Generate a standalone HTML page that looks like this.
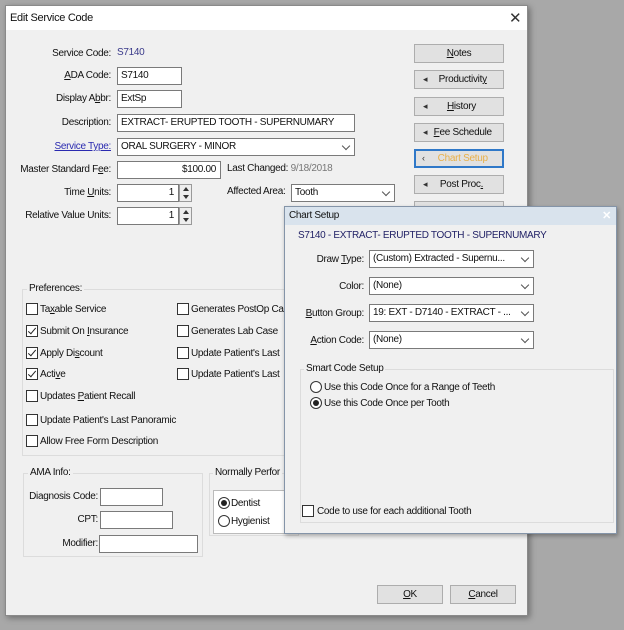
<!DOCTYPE html>
<html><head><style>
*{box-sizing:border-box;margin:0;padding:0}
body{width:624px;height:630px;background:#a8a8a8;font-family:"Liberation Sans",sans-serif;font-size:10px;letter-spacing:-0.3px;color:#111;position:relative;overflow:hidden}
.a{position:absolute;white-space:nowrap}
.win{position:absolute;left:5px;top:5px;width:523px;height:611px;background:#f0f0f0;border:1px solid #8a8a8a;box-shadow:2px 2px 6px rgba(0,0,0,.35)}
.tb{position:absolute;left:0;top:0;right:0;height:24px;background:#fff}
.in{position:absolute;background:#fff;border:1px solid #7a7a7a;height:18px;line-height:16px;padding-left:3px;overflow:hidden;white-space:nowrap}
.r{text-align:right;padding-right:4px}
.lb{position:absolute;text-align:right;line-height:14px;white-space:nowrap}
.btn{position:absolute;background:#e1e1e1;border:1px solid #adadad;height:19px;line-height:17px;text-align:center;white-space:nowrap}
.arr{position:absolute;left:8px;top:0;font-size:9px;color:#333}
.chev{position:absolute;right:5px;top:2px;width:6px;height:6px;border-right:1px solid #555;border-bottom:1px solid #555;transform:rotate(45deg)}
.cb{position:absolute;width:12px;height:12px;border:1px solid #333;background:#fff}
.cb.on::after{content:"";position:absolute;left:3px;top:0px;width:3px;height:7px;border-right:1px solid #222;border-bottom:1px solid #222;transform:rotate(40deg)}
.rd{position:absolute;width:12px;height:12px;border:1px solid #333;border-radius:50%;background:#fff}
.rd.on::after{content:"";position:absolute;left:2px;top:2px;width:6px;height:6px;border-radius:50%;background:#222}
.grp{position:absolute;border:1px solid #dcdcdc}
.gl{position:absolute;background:#f0f0f0;padding:0 2px;line-height:13px;white-space:nowrap}
.spin{position:absolute;width:13px;height:18px;border:1px solid #9a9a9a;background:#eee}
.spin::before{content:"";position:absolute;left:3px;top:2px;border:3px solid transparent;border-bottom:4px solid #333;border-top:0}
.spin::after{content:"";position:absolute;left:3px;bottom:2px;border:3px solid transparent;border-top:4px solid #333;border-bottom:0}
u{text-decoration:underline}
</style></head><body>
<div class="win">
<div class="tb"><span class="a" style="left:4px;top:6px;font-size:11px">Edit Service Code</span><span class="a" style="left:503px;top:3px;font-size:15px;font-weight:100;color:#333">✕</span></div>
</div>
<div class="lb" style="left:0;width:111px;top:47px">Service Code:</div>
<span class="a" style="left:117px;top:47px;color:#3a3a8a">S7140</span>
<div class="lb" style="left:0;width:111px;top:69px"><u>A</u>DA Code:</div>
<div class="in" style="left:117px;top:67px;width:65px">S7140</div>
<div class="lb" style="left:0;width:111px;top:92px">Display A<u>b</u>br:</div>
<div class="in" style="left:117px;top:90px;width:65px">ExtSp</div>
<div class="lb" style="left:0;width:111px;top:116px">Description:</div>
<div class="in" style="left:117px;top:114px;width:238px">EXTRACT- ERUPTED TOOTH - SUPERNUMARY</div>
<div class="lb" style="left:0;width:111px;top:140px;color:#2a2ab0"><u>Service Type:</u></div>
<div class="in" style="left:117px;top:138px;width:238px">ORAL SURGERY - MINOR<span class="chev" style="top:4px"></span></div>
<div class="lb" style="left:0;width:111px;top:163px">Master Standard F<u>e</u>e:</div>
<div class="in r" style="left:117px;top:161px;width:104px">$100.00</div>
<span class="a" style="left:227px;top:163px">Last Changed: <span style="color:#777">9/18/2018</span></span>
<div class="lb" style="left:0;width:111px;top:186px">Time <u>U</u>nits:</div>
<div class="in r" style="left:117px;top:184px;width:62px">1</div><div class="spin" style="left:179px;top:184px"></div>
<span class="a" style="left:227px;top:186px">Affected Area:</span>
<div class="in" style="left:291px;top:184px;width:104px">Tooth<span class="chev" style="top:4px"></span></div>
<div class="lb" style="left:0;width:111px;top:209px">Relative Value Units:</div>
<div class="in r" style="left:117px;top:207px;width:62px">1</div><div class="spin" style="left:179px;top:207px"></div>
<div class="btn" style="left:414px;top:44px;width:90px"><u>N</u>otes</div>
<div class="btn" style="left:414px;top:70px;width:90px"><span class="arr">◂</span>&nbsp;&nbsp;&nbsp;Productivit<u>y</u></div>
<div class="btn" style="left:414px;top:97px;width:90px"><span class="arr">◂</span>&nbsp;&nbsp;<u>H</u>istory</div>
<div class="btn" style="left:414px;top:123px;width:90px"><span class="arr">◂</span>&nbsp;&nbsp;&nbsp;<u>F</u>ee Schedule</div>
<div class="btn" style="left:414px;top:149px;width:90px;border:2px solid #2f78c8;color:#e8b04a;line-height:15px"><span class="arr" style="color:#333;left:6px">‹</span>&nbsp;&nbsp;&nbsp;Chart Setup</div>
<div class="btn" style="left:414px;top:175px;width:90px"><span class="arr">◂</span>&nbsp;&nbsp;Post Proc<u>.</u></div>
<div class="btn" style="left:414px;top:201px;width:90px"></div>
<div class="grp" style="left:22px;top:289px;width:280px;height:167px"></div>
<span class="gl" style="left:27px;top:282px">Preferences:</span>
<div class="cb" style="left:26px;top:303px"></div><span class="a" style="left:40px;top:304px">Ta<u>x</u>able Service</span>
<div class="cb on" style="left:26px;top:325px"></div><span class="a" style="left:40px;top:326px">Submit On <u>I</u>nsurance</span>
<div class="cb on" style="left:26px;top:347px"></div><span class="a" style="left:40px;top:348px">Apply Di<u>s</u>count</span>
<div class="cb on" style="left:26px;top:368px"></div><span class="a" style="left:40px;top:369px">Acti<u>v</u>e</span>
<div class="cb" style="left:26px;top:390px"></div><span class="a" style="left:40px;top:391px">Updates <u>P</u>atient Recall</span>
<div class="cb" style="left:26px;top:414px"></div><span class="a" style="left:40px;top:415px">Update Patient's Last Panoramic</span>
<div class="cb" style="left:26px;top:435px"></div><span class="a" style="left:40px;top:436px">Allow Free Form Description</span>
<div class="cb" style="left:177px;top:303px"></div><span class="a" style="left:191px;top:304px">Generates PostOp Ca</span>
<div class="cb" style="left:177px;top:325px"></div><span class="a" style="left:191px;top:326px">Generates Lab Case</span>
<div class="cb" style="left:177px;top:347px"></div><span class="a" style="left:191px;top:348px">Update Patient's Last</span>
<div class="cb" style="left:177px;top:368px"></div><span class="a" style="left:191px;top:369px">Update Patient's Last</span>
<div class="grp" style="left:23px;top:473px;width:180px;height:84px"></div>
<span class="gl" style="left:28px;top:466px">AMA Info:</span>
<div class="lb" style="left:0;width:98px;top:490px">Diagnosis Code:</div><div class="in" style="left:100px;top:488px;width:63px"></div>
<div class="lb" style="left:0;width:98px;top:513px">CPT:</div><div class="in" style="left:100px;top:511px;width:73px"></div>
<div class="lb" style="left:0;width:98px;top:537px">Modifier:</div><div class="in" style="left:99px;top:535px;width:99px"></div>
<div class="grp" style="left:209px;top:473px;width:90px;height:63px"></div>
<span class="gl" style="left:213px;top:466px">Normally Perfor</span>
<div style="position:absolute;left:213px;top:490px;width:80px;height:44px;background:#fff;border:1px solid #bbb"></div>
<div class="rd on" style="left:218px;top:497px"></div><span class="a" style="left:231px;top:498px">Dentist</span>
<div class="rd" style="left:218px;top:515px"></div><span class="a" style="left:231px;top:516px">Hygienist</span>
<div class="btn" style="left:377px;top:585px;width:66px;height:19px"><u>O</u>K</div>
<div class="btn" style="left:450px;top:585px;width:66px;height:19px"><u>C</u>ancel</div>
<div style="position:absolute;left:284px;top:206px;width:333px;height:328px;background:#f0f0f0;border:1px solid #8494a8;box-shadow:1px 2px 4px rgba(0,0,0,.3)">
<div style="position:absolute;left:0;top:0;right:0;height:18px;background:#d9e3ed"><span class="a" style="left:4px;top:3px">Chart Setup</span><span class="a" style="right:5px;top:2px;color:#fff;font-weight:bold;font-size:11px">✕</span></div>
</div>
<span class="a" style="left:298px;top:230px;color:#222266">S7140 - EXTRACT- ERUPTED TOOTH - SUPERNUMARY</span>
<div class="lb" style="left:290px;width:74px;top:253px">Draw <u>T</u>ype:</div>
<div class="in" style="left:369px;top:250px;width:165px">(Custom) Extracted - Supernu...<span class="chev" style="top:4px"></span></div>
<div class="lb" style="left:290px;width:74px;top:280px">Color:</div>
<div class="in" style="left:369px;top:277px;width:165px">(None)<span class="chev" style="top:4px"></span></div>
<div class="lb" style="left:290px;width:74px;top:307px"><u>B</u>utton Group:</div>
<div class="in" style="left:369px;top:304px;width:165px">19: EXT - D7140 - EXTRACT - ...<span class="chev" style="top:4px"></span></div>
<div class="lb" style="left:290px;width:74px;top:334px"><u>A</u>ction Code:</div>
<div class="in" style="left:369px;top:331px;width:165px">(None)<span class="chev" style="top:4px"></span></div>
<div class="grp" style="left:300px;top:369px;width:314px;height:154px"></div>
<span class="gl" style="left:304px;top:362px">Smart Code Setup</span>
<div class="rd" style="left:310px;top:381px"></div><span class="a" style="left:324px;top:382px">Use this Code Once for a Range of Teeth</span>
<div class="rd on" style="left:310px;top:397px"></div><span class="a" style="left:324px;top:398px">Use this Code Once per Tooth</span>
<div class="cb" style="left:302px;top:505px"></div><span class="a" style="left:317px;top:506px">Code to use for each additional Tooth</span>
</body></html>
